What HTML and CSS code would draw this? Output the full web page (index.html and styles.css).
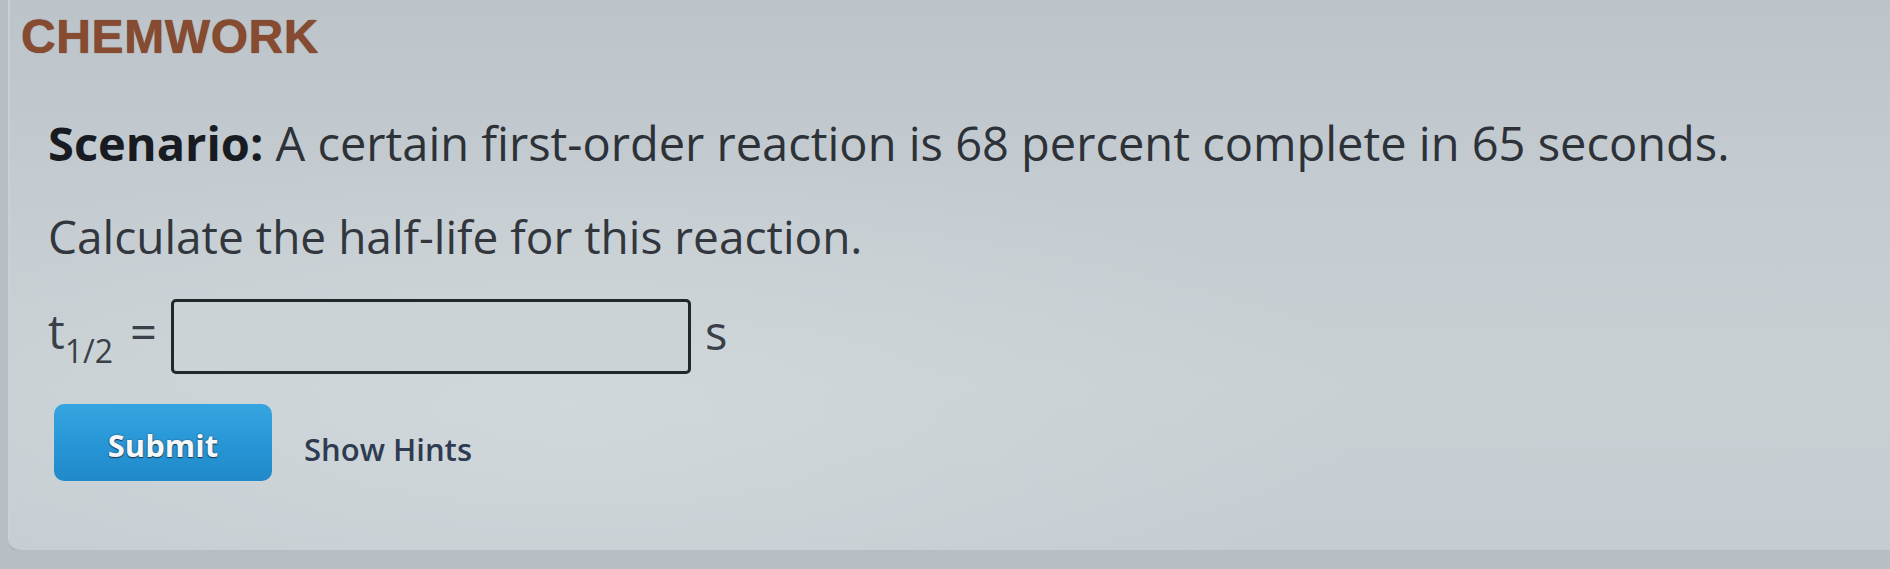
FILE: index.html
```html
<!DOCTYPE html>
<html lang="en">
<head>
    <meta charset="UTF-8">
    <meta name="viewport" content="width=device-width, initial-scale=1.0">
    <title>Chemwork</title>
    <link rel="stylesheet" href="styles.css">
</head>
<body>
    <div class="question-card">
        <!-- Header -->
        <h1 class="brand">CHEMWORK</h1>

        <!-- Problem text -->
        <p class="scenario"><b>Scenario:</b> A certain first-order reaction is 68 percent complete in 65 seconds.</p>
        <p class="prompt">Calculate the half-life for this reaction.</p>

        <!-- Answer row -->
        <form id="answer-form">
            <div class="answer-row">
                <label for="half-life" class="answer-label">t<span class="sub">1/2</span><span class="equals">=</span></label>
                <input type="text" id="half-life" name="half-life" class="answer-input" autocomplete="off">
                <span class="unit">s</span>
            </div>

            <div class="actions">
                <button type="submit" class="submit-button">Submit</button>
                <a href="#" class="hints-link" id="show-hints">Show Hints</a>
            </div>
        </form>
    </div>

    <script>
        // Keep the page in place when the answer is submitted
        document.getElementById('answer-form').addEventListener('submit', function (event) {
            event.preventDefault();
        });

        document.getElementById('show-hints').addEventListener('click', function (event) {
            event.preventDefault();
        });
    </script>
</body>
</html>
```

FILE: styles.css
```css
body {
    margin: 0;
    padding: 0;
    background-color: #b7bec4;
    font-family: "Open Sans", "Noto Sans", Arial, sans-serif;
    overflow: hidden;
}
.question-card {
    margin-left: 10px;
    padding: 13px 0 69px 38px;
    border-bottom-left-radius: 12px;
    background:
        radial-gradient(ellipse 60% 70% at 30% 75%, rgba(214, 221, 224, 0.6), rgba(214, 221, 224, 0) 70%),
        linear-gradient(to bottom, #bdc4c9 0%, #c5ccd1 35%, #c8d0d4 70%, #c5cdd2 100%);
    box-shadow: -2px 0 0 #cbd0d4, 0 2px 3px rgba(80, 90, 100, 0.35);
}
.brand {
    margin: 0 0 0 -27px;
    font-family: "Liberation Sans", Arial, sans-serif;
    font-size: 48px;
    font-weight: bold;
    line-height: 47px;
    letter-spacing: 0.6px;
    color: #874b31;
    text-shadow: 0 0 1px #5c2f1f;
}
.scenario {
    margin: 51px 0 0;
    font-size: 47px;
    line-height: 64px;
    color: #2d3239;
    white-space: nowrap;
}
.scenario b {
    font-weight: bold;
    color: #181c22;
}
.prompt {
    margin: 29px 0 0;
    font-size: 46px;
    line-height: 64px;
    color: #32373e;
}
form {
    margin: 0;
}
.answer-row {
    display: flex;
    align-items: flex-start;
    margin-top: 31px;
}
.answer-label {
    font-size: 47px;
    line-height: 64px;
    color: #3a4047;
    white-space: nowrap;
}
.sub {
    font-size: 32px;
    line-height: 0;
    vertical-align: -14px;
}
.equals {
    margin-left: 17px;
}
.answer-input {
    box-sizing: border-box;
    width: 520px;
    height: 75px;
    margin-left: 14px;
    padding: 0 12px;
    border: 3px solid #22272c;
    border-radius: 5px;
    background-color: #ccd3d7;
    font-family: inherit;
    font-size: 30px;
    outline: none;
}
.unit {
    margin-left: 14px;
    font-size: 47px;
    line-height: 66px;
    color: #3a4047;
}
.actions {
    display: flex;
    align-items: flex-start;
    margin-top: 30px;
}
.submit-button {
    box-sizing: border-box;
    width: 218px;
    height: 77px;
    margin-left: 6px;
    padding: 6px 0 0;
    border: none;
    border-radius: 10px;
    background: linear-gradient(to bottom, #35a5e0, #2694d4 60%, #2089c9);
    color: #f4f8fa;
    font-family: inherit;
    font-size: 31px;
    font-weight: bold;
    line-height: 71px;
    text-align: center;
    text-shadow: 0 1px 1px #1d3a52, 0 0 2px #2a4a66;
    cursor: pointer;
}
.hints-link {
    margin: 25px 0 0 32px;
    font-size: 31px;
    font-weight: 600;
    line-height: 40px;
    color: #2e3b50;
    text-decoration: none;
}
```
